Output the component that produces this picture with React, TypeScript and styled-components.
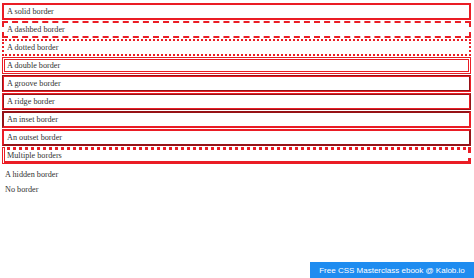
import styled, { createGlobalStyle } from "styled-components";

const GlobalStyle = createGlobalStyle`
    html, body {
        margin: 0;
        background: #ffffff;
    }
`;

const Page = styled.div`
    padding: 3px 3px 0 2px;
    display: flex;
    flex-direction: column;
    gap: 1px;
    font-family: "Liberation Serif", "Times New Roman", serif;
    font-size: 8.2px;
    color: #333;
`;

const BorderBox = styled.p<{ $style: string; $width?: number }>`
    margin: 0;
    box-sizing: border-box;
    height: 17px;
    display: flex;
    align-items: center;
    border-width: ${p => p.$width ?? 2}px;
    border-style: ${p => p.$style};
    border-color: #ea1d25;
    padding-left: ${p => 5 - (p.$width ?? 2)}px;
`;

const PlainLine = styled.p<{ $gapTop?: number }>`
    margin: ${p => p.$gapTop ?? 0}px 0 0;
    height: 14px;
    display: flex;
    align-items: center;
    padding-left: 3px;
`;

const Promo = styled.a`
    position: fixed;
    right: 0;
    bottom: 0;
    width: 164px;
    height: 16px;
    background: #1e8cf0;
    color: #ffffff;
    font-family: "Liberation Sans", Arial, sans-serif;
    font-size: 8px;
    display: flex;
    align-items: center;
    justify-content: center;
    text-decoration: none;
`;

const rows: { label: string; style: string; width?: number }[] = [
    { label: "A solid border", style: "solid" },
    { label: "A dashbed border", style: "dashed" },
    { label: "A dotted border", style: "dotted" },
    { label: "A double border", style: "double", width: 3 },
    { label: "A groove border", style: "groove" },
    { label: "A ridge border", style: "ridge" },
    { label: "An inset border", style: "inset" },
    { label: "An outset border", style: "outset" },
    { label: "Multiple borders", style: "dotted dashed solid double", width: 3 },
];

export default function App() {
    return (
        <>
            <GlobalStyle />
            <Page>
                {rows.map(r => (
                    <BorderBox key={r.label} $style={r.style} $width={r.width}>
                        {r.label}
                    </BorderBox>
                ))}
                <PlainLine $gapTop={2}>A hidden border</PlainLine>
                <PlainLine>No border</PlainLine>
            </Page>
            <Promo href="#">Free CSS Masterclass ebook @ Kalob.io</Promo>
        </>
    );
}
